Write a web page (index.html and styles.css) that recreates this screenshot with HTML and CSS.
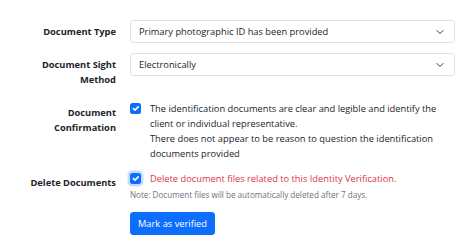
FILE: index.html
```html
<!DOCTYPE html>
<html lang="en">
<head>
<meta charset="utf-8">
<title>Identity Verification</title>
<link rel="stylesheet" href="styles.css">
</head>
<body>
<form class="form">
  <div class="row">
    <label class="label">Document Type</label>
    <div class="control">
      <div class="select">
        <span>Primary photographic ID has been provided</span>
        <svg class="chev" viewBox="0 0 16 16" width="8" height="8"><path d="M2 5l6 6 6-6" fill="none" stroke="#343a40" stroke-width="2" stroke-linecap="round" stroke-linejoin="round"/></svg>
      </div>
    </div>
  </div>
  <div class="row">
    <label class="label">Document Sight<br>Method</label>
    <div class="control">
      <div class="select">
        <span>Electronically</span>
        <svg class="chev" viewBox="0 0 16 16" width="8" height="8"><path d="M2 5l6 6 6-6" fill="none" stroke="#343a40" stroke-width="2" stroke-linecap="round" stroke-linejoin="round"/></svg>
      </div>
    </div>
  </div>
  <div class="row">
    <label class="label check-label">Document<br>Confirmation</label>
    <div class="control">
      <div class="check">
        <span class="box"><svg viewBox="0 0 20 20" width="11" height="11"><path d="M6 10l3 3 6-6" fill="none" stroke="#fff" stroke-width="3" stroke-linecap="round" stroke-linejoin="round"/></svg></span>
        <span class="check-text">The identification documents are clear and legible and identify the client or individual representative.<br>There does not appear to be reason to question the identification documents provided</span>
      </div>
    </div>
  </div>
  <div class="row">
    <label class="label check-label">Delete Documents</label>
    <div class="control">
      <div class="check">
        <span class="box focus"><svg viewBox="0 0 20 20" width="11" height="11"><path d="M6 10l3 3 6-6" fill="none" stroke="#fff" stroke-width="3" stroke-linecap="round" stroke-linejoin="round"/></svg></span>
        <span class="check-text danger">Delete document files related to this Identity Verification.</span>
      </div>
      <div class="note">Note: Document files will be automatically deleted after 7 days.</div>
      <button type="button" class="btn">Mark as verified</button>
    </div>
  </div>
</form>
</body>
</html>
```
FILE: styles.css
```css
html, body {
  margin: 0;
  padding: 0;
  background: #fff;
}
body {
  font-family: "Open Sans", "Noto Sans", sans-serif;
  font-size: 9.3px;
  line-height: 15px;
  color: #212529;
}
.form {
  padding-top: 20px;
  display: flex;
  flex-direction: column;
  gap: 10px;
}
.row {
  display: flex;
  align-items: flex-start;
}
.label {
  width: 116px;
  margin-right: 14px;
  text-align: right;
  font-weight: 700;
  padding-top: 4px;
  padding-bottom: 4px;
}
.check-label {
  padding-top: 4px;
}
.control {
  width: 325px;
}
.select {
  box-sizing: border-box;
  height: 23px;
  border: 1px solid #dee2e6;
  border-radius: 3px;
  padding: 0 0 0 8px;
  display: flex;
  align-items: center;
  justify-content: space-between;
}
.chev {
  margin-right: 10px;
}
.check {
  display: flex;
  align-items: flex-start;
}
.box {
  flex: none;
  width: 11px;
  height: 11px;
  margin-top: 2px;
  margin-right: 9px;
  border-radius: 2.5px;
  background: #0d6efd;
  display: flex;
}
.box.focus {
  box-shadow: 0 0 0 2.5px rgba(13, 110, 253, 0.25);
}
.danger {
  color: #dc3545;
}
.note {
  font-size: 8.1px;
  line-height: 13px;
  color: #6c757d;
  margin-top: 2px;
}
.btn {
  margin-top: 11px;
  height: 23px;
  padding: 0 7px;
  border: 1px solid #0d6efd;
  border-radius: 3px;
  background: #0d6efd;
  color: #fff;
  font-family: inherit;
  font-size: 9.3px;
}
```
